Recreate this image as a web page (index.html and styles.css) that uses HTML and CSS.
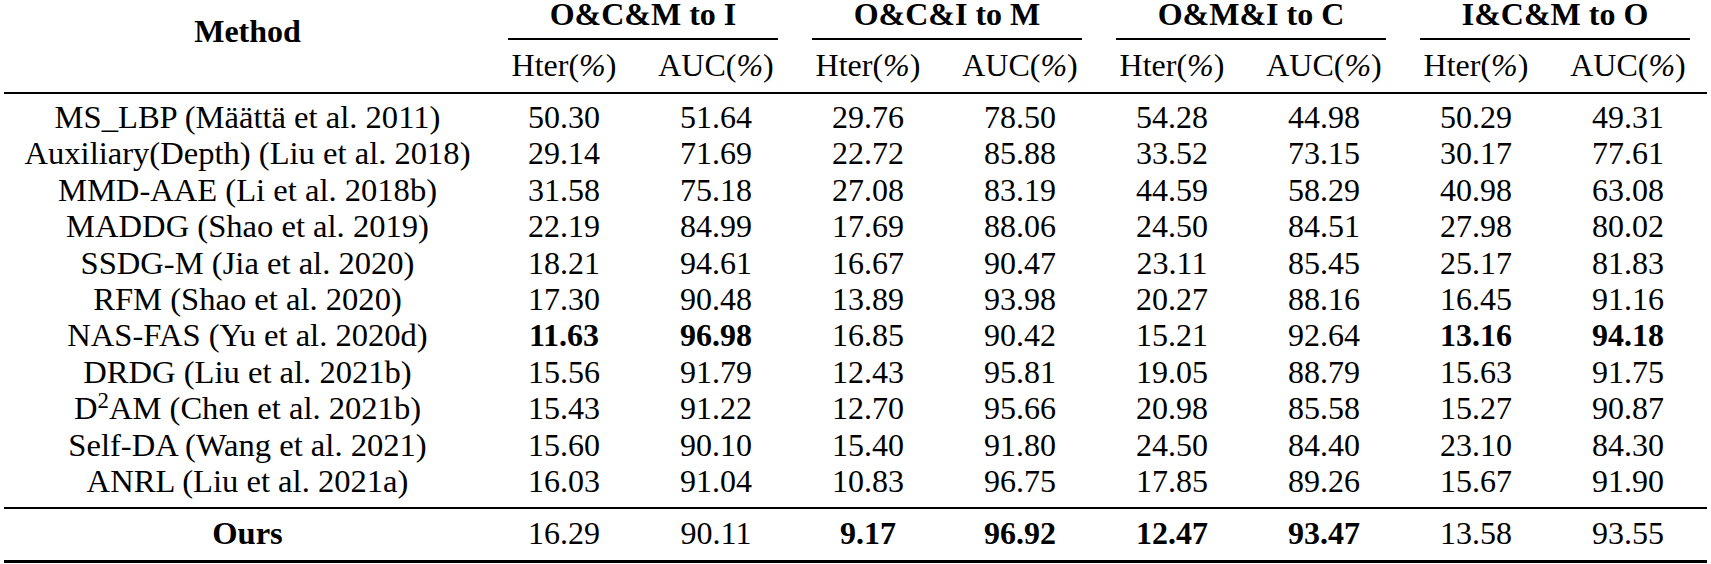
FILE: index.html
```html
<!DOCTYPE html>
<html lang="en">

<head>
    <meta charset="UTF-8">
    <meta name="viewport" content="width=device-width, initial-scale=1.0">
    <title>Cross-domain results</title>
    <link rel="stylesheet" href="styles.css">
</head>

<body>
    <table class="results">
        <colgroup>
            <col class="col-method">
            <col class="col-hter"><col class="col-auc">
            <col class="col-hter"><col class="col-auc">
            <col class="col-hter"><col class="col-auc">
            <col class="col-hter"><col class="col-auc">
        </colgroup>
        <thead>
            <tr class="group-row">
                <th class="method-head" rowspan="2">Method</th>
                <th colspan="2"><div class="group-title">O&amp;C&amp;M to I</div></th>
                <th colspan="2"><div class="group-title">O&amp;C&amp;I to M</div></th>
                <th colspan="2"><div class="group-title">O&amp;M&amp;I to C</div></th>
                <th colspan="2"><div class="group-title">I&amp;C&amp;M to O</div></th>
            </tr>
            <tr class="sub-row">
                <th>Hter(<i>%</i>)</th><th>AUC(<i>%</i>)</th>
                <th>Hter(<i>%</i>)</th><th>AUC(<i>%</i>)</th>
                <th>Hter(<i>%</i>)</th><th>AUC(<i>%</i>)</th>
                <th>Hter(<i>%</i>)</th><th>AUC(<i>%</i>)</th>
            </tr>
        </thead>
        <tbody class="others">
            <tr>
                <td>MS_LBP (Määttä et al. 2011)</td>
                <td>50.30</td><td>51.64</td><td>29.76</td><td>78.50</td>
                <td>54.28</td><td>44.98</td><td>50.29</td><td>49.31</td>
            </tr>
            <tr>
                <td>Auxiliary(Depth) (Liu et al. 2018)</td>
                <td>29.14</td><td>71.69</td><td>22.72</td><td>85.88</td>
                <td>33.52</td><td>73.15</td><td>30.17</td><td>77.61</td>
            </tr>
            <tr>
                <td>MMD-AAE (Li et al. 2018b)</td>
                <td>31.58</td><td>75.18</td><td>27.08</td><td>83.19</td>
                <td>44.59</td><td>58.29</td><td>40.98</td><td>63.08</td>
            </tr>
            <tr>
                <td>MADDG (Shao et al. 2019)</td>
                <td>22.19</td><td>84.99</td><td>17.69</td><td>88.06</td>
                <td>24.50</td><td>84.51</td><td>27.98</td><td>80.02</td>
            </tr>
            <tr>
                <td>SSDG-M (Jia et al. 2020)</td>
                <td>18.21</td><td>94.61</td><td>16.67</td><td>90.47</td>
                <td>23.11</td><td>85.45</td><td>25.17</td><td>81.83</td>
            </tr>
            <tr>
                <td>RFM (Shao et al. 2020)</td>
                <td>17.30</td><td>90.48</td><td>13.89</td><td>93.98</td>
                <td>20.27</td><td>88.16</td><td>16.45</td><td>91.16</td>
            </tr>
            <tr>
                <td>NAS-FAS (Yu et al. 2020d)</td>
                <td><b>11.63</b></td><td><b>96.98</b></td><td>16.85</td><td>90.42</td>
                <td>15.21</td><td>92.64</td><td><b>13.16</b></td><td><b>94.18</b></td>
            </tr>
            <tr>
                <td>DRDG (Liu et al. 2021b)</td>
                <td>15.56</td><td>91.79</td><td>12.43</td><td>95.81</td>
                <td>19.05</td><td>88.79</td><td>15.63</td><td>91.75</td>
            </tr>
            <tr>
                <td>D<sup>2</sup>AM (Chen et al. 2021b)</td>
                <td>15.43</td><td>91.22</td><td>12.70</td><td>95.66</td>
                <td>20.98</td><td>85.58</td><td>15.27</td><td>90.87</td>
            </tr>
            <tr>
                <td>Self-DA (Wang et al. 2021)</td>
                <td>15.60</td><td>90.10</td><td>15.40</td><td>91.80</td>
                <td>24.50</td><td>84.40</td><td>23.10</td><td>84.30</td>
            </tr>
            <tr>
                <td>ANRL (Liu et al. 2021a)</td>
                <td>16.03</td><td>91.04</td><td>10.83</td><td>96.75</td>
                <td>17.85</td><td>89.26</td><td>15.67</td><td>91.90</td>
            </tr>
        </tbody>
        <tbody class="ours">
            <tr>
                <td><b>Ours</b></td>
                <td>16.29</td><td>90.11</td><td><b>9.17</b></td><td><b>96.92</b></td>
                <td><b>12.47</b></td><td><b>93.47</b></td><td>13.58</td><td>93.55</td>
            </tr>
        </tbody>
    </table>
</body>

</html>
```

FILE: styles.css
```css
body {
    margin: 0;
    background-color: #fff;
    color: #000;
    font-family: "Liberation Serif", "Times New Roman", serif;
}

.results {
    table-layout: fixed;
    width: 1703px;
    margin-left: 4px;
    border-collapse: separate;
    border-spacing: 0;
    font-size: 32px;
}

.col-method {
    width: 487px;
}

.col-hter {
    width: 146px;
}

.col-auc {
    width: 158px;
}

.results th,
.results td {
    padding: 0;
    text-align: center;
    white-space: nowrap;
}

.results i {
    font-style: italic;
}

/* header rows */
.group-row th {
    font-weight: bold;
    vertical-align: top;
}

.group-title {
    margin: 0 17px;
    padding-bottom: 10px;
    line-height: 28px;
    border-bottom: 2px solid #000;
}

.method-head {
    padding-top: 13px !important;
    line-height: 36px;
    border-bottom: 2px solid #000;
}

.sub-row th {
    font-weight: normal;
    line-height: 36px;
    padding: 7px 0 9px;
    border-bottom: 2px solid #000;
}

/* body rows */
.results tbody td {
    line-height: 36.4px;
}

/* method names come out a touch wider in the original */
.results tbody td:first-child {
    font-size: 32.6px;
}

.others tr:first-child td {
    padding-top: 5px;
}

.others tr:last-child td {
    padding-bottom: 8px;
    border-bottom: 2px solid #000;
}

.ours td {
    padding: 6px 0 8px;
    border-bottom: 3px solid #000;
}

sup {
    font-size: 0.7em;
    line-height: 0;
    vertical-align: 0.5em;
}
```
